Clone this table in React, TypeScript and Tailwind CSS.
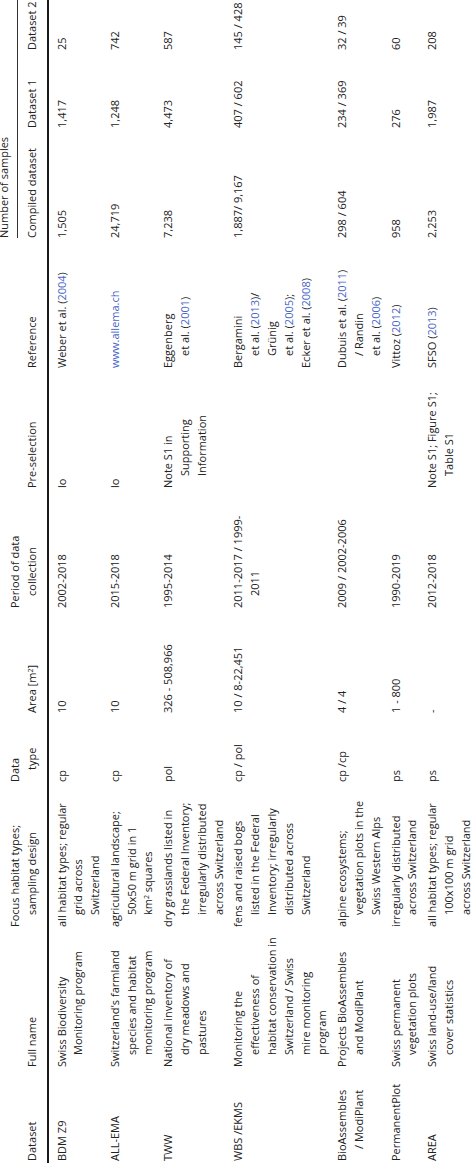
import type { ReactNode } from "react";

// column widths along the (unrotated) table, left to right
const cols = [
  "w-[96px] pl-[2px]",
  "w-[140px]",
  "w-[145px]",
  "w-[69px]",
  "w-[105px]",
  "w-[120px]",
  "w-[120px]",
  "w-[130px]",
  "w-[110px]",
  "w-[78px]",
  "w-[50px]",
];

type Line = ReactNode | { flush: ReactNode };

const Yr = ({ y }: { y: string }) => <span className="text-[#4766c8]">{y}</span>;

const rows: Line[][][] = [
  [
    ["BDM Z9"],
    ["Swiss Biodiversity", "Monitoring program"],
    ["all habitat types; regular", "grid across", "Switzerland"],
    ["cp"],
    ["10"],
    ["2002-2018"],
    ["lo"],
    [<>Weber et al. (<Yr y="2004" />)</>],
    ["1,505"],
    ["1,417"],
    ["25"],
  ],
  [
    ["ALL-EMA"],
    ["Switzerland's farmland", "species and habitat", "monitoring program"],
    [
      "agricultural landscape;",
      "50x50 m grid in 1",
      <>
        km<sup className="text-[7px]">2</sup> squares
      </>,
    ],
    ["cp"],
    ["10"],
    ["2015-2018"],
    ["lo"],
    [<span className="text-[#4766c8]">www.allema.ch</span>],
    ["24,719"],
    ["1,248"],
    ["742"],
  ],
  [
    ["TWW"],
    ["National inventory of", "dry meadows and", "pastures"],
    ["dry grasslands listed in", "the Federal Inventory;", "irregularly distributed", "across Switzerland"],
    ["pol"],
    ["326 - 508,966"],
    ["1995-2014"],
    ["Note S1 in", "Supporting", "Information"],
    ["Eggenberg", <>et al. (<Yr y="2001" />)</>],
    ["7,238"],
    ["4,473"],
    ["587"],
  ],
  [
    ["WBS /EKMS"],
    [
      "Monitoring the",
      "effectiveness of",
      "habitat conservation in",
      "Switzerland / Swiss",
      "mire monitoring",
      "program",
    ],
    ["fens and raised bogs", "listed in the Federal", "Inventory; irregularly", "distributed across", "Switzerland"],
    ["cp / pol"],
    ["10 / 8-22,451"],
    ["2011-2017 / 1999-", "2011"],
    [],
    [
      "Bergamini",
      <>et al. (<Yr y="2013" />)/</>,
      "Grünig",
      <>et al. (<Yr y="2005" />);</>,
      { flush: <>Ecker et al. (<Yr y="2008" />)</> },
    ],
    ["1,887/ 9,167"],
    ["407 / 602"],
    ["145 / 428"],
  ],
  [
    ["BioAssembles", "/ ModiPlant"],
    ["Projects BioAssembles", "and ModiPlant"],
    ["alpine ecosystems;", "vegetation plots in the", "Swiss Western Alps"],
    ["cp /cp"],
    ["4 / 4"],
    ["2009 / 2002-2006"],
    [],
    [<>Dubuis et al. (<Yr y="2011" />)</>, "/ Randin", <>et al. (<Yr y="2006" />)</>],
    ["298 / 604"],
    ["234 / 369"],
    ["32 / 39"],
  ],
  [
    ["PermanentPlot"],
    ["Swiss permanent", "vegetation plots"],
    ["irregularly distributed", "across Switzerland"],
    ["ps"],
    ["1 - 800"],
    ["1990-2019"],
    [],
    [<>Vittoz (<Yr y="2012" />)</>],
    ["958"],
    ["276"],
    ["60"],
  ],
  [
    ["AREA"],
    ["Swiss land-use/land", "cover statistics"],
    ["all habitat types; regular", "100x100 m grid", "across Switzerland"],
    ["ps"],
    ["-"],
    ["2012-2018"],
    ["Note S1; Figure S1;", "Table S1"],
    [<>SFSO (<Yr y="2013" />)</>],
    ["2,253"],
    ["1,987"],
    ["208"],
  ],
];

function Cell({ lines, w }: { lines: Line[]; w: string }) {
  return (
    <div className={`${w} shrink-0`}>
      {lines.map((l, i) => {
        const flush = typeof l === "object" && l !== null && "flush" in (l as object);
        return (
          <div key={i} className={i && !flush ? "whitespace-nowrap pl-[12px]" : "whitespace-nowrap"}>
            {flush ? (l as { flush: ReactNode }).flush : (l as ReactNode)}
          </div>
        );
      })}
    </div>
  );
}

function Head({ lines, w }: { lines: ReactNode[]; w: string }) {
  return (
    <div className={`${w} flex shrink-0 flex-col justify-end pb-[6px]`}>
      {lines.map((l, i) => (
        <div key={i} className={i ? "whitespace-nowrap pl-[12px]" : "whitespace-nowrap"}>
          {l}
        </div>
      ))}
    </div>
  );
}

export default function App() {
  return (
    <div className="h-[1163px] w-[474px] overflow-hidden bg-white">
      <div className="h-[474px] w-[1163px] origin-top-left translate-y-[1163px] -rotate-90 font-['Open_Sans',sans-serif] text-[11px] leading-[16.8px] text-[#222]">
        <div className="flex h-[49px] border-b-2 border-[#1a1a1a]">
          <Head w={cols[0]} lines={["Dataset"]} />
          <Head w={cols[1]} lines={["Full name"]} />
          <Head w={cols[2]} lines={["Focus habitat types;", "sampling design"]} />
          <Head w={cols[3]} lines={["Data", "type"]} />
          <Head
            w={cols[4]}
            lines={[
              <>
                Area [m<sup className="text-[7px]">2</sup>]
              </>,
            ]}
          />
          <Head w={cols[5]} lines={["Period of data", "collection"]} />
          <Head w={cols[6]} lines={["Pre-selection"]} />
          <Head w={cols[7]} lines={["Reference"]} />
          <div className="flex w-[238px] shrink-0 flex-col justify-end pb-[6px]">
            <div className="whitespace-nowrap">Number of samples</div>
            <div className="mt-[4px] flex border-t border-[#333] pt-[6.5px]">
              <div className={`${cols[8]} shrink-0`}>Compiled dataset</div>
              <div className={`${cols[9]} shrink-0`}>Dataset 1</div>
              <div className={`${cols[10]} shrink-0 whitespace-nowrap`}>Dataset 2</div>
            </div>
          </div>
        </div>
        <div className="pt-[3px]">
          {rows.map((r, i) => (
            <div key={i} className="flex py-[1.5px]">
              {r.map((c, j) => (
                <Cell key={j} w={cols[j]} lines={c} />
              ))}
            </div>
          ))}
        </div>
      </div>
    </div>
  );
}
